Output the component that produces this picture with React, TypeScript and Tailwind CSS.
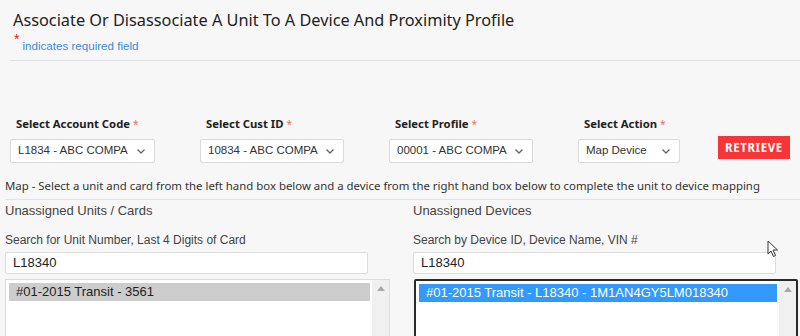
import React from "react";

const labels = [
  { text: "Select Account Code", value: "L1834 - ABC COMPA", w: "w-[145px]" },
  { text: "Select Cust ID", value: "10834 - ABC COMPA", w: "w-[144px]" },
  { text: "Select Profile", value: "00001 - ABC COMPA", w: "w-[144px]" },
  { text: "Select Action", value: "Map Device", w: "w-[102px]" },
];

const Chevron = () => (
  <svg width="10" height="7" viewBox="0 0 10 7" className="shrink-0">
    <path d="M1.5 1.5 L5 5 L8.5 1.5" fill="none" stroke="#666" strokeWidth="1.3" />
  </svg>
);

const ScrollUp = () => (
  <svg width="8" height="5" viewBox="0 0 8 5">
    <path d="M0 5 L4 0 L8 5 Z" fill="#a8a8a8" />
  </svg>
);

const Field = ({ label, value, w }: { label: string; value: string; w: string }) => (
  <div className="flex flex-col">
    <div className="pl-[6px] text-[11.3px] font-bold text-[#222] leading-[16px] [font-family:'Noto_Sans',sans-serif]">
      {label} <span className="text-[#ee6a6a] font-normal text-[10px] align-top">*</span>
    </div>
    <div
      className={`mt-[7px] h-[24px] ${w} bg-white border border-[#d9d9d9] rounded-[2px] flex items-center justify-between pl-[7px] pr-[8px] text-[11.5px] text-[#333] [font-family:'Liberation_Sans',Arial,sans-serif]`}
    >
      <span className="truncate">{value}</span>
      <Chevron />
    </div>
  </div>
);

const Column = ({
  title,
  hint,
  item,
  focused,
}: {
  title: string;
  hint: string;
  item: string;
  focused?: boolean;
}) => (
  <div className="flex flex-col w-[408px] shrink-0 pt-[3px] [font-family:'Liberation_Sans',Arial,sans-serif]">
    <div className="text-[13px] text-[#444] leading-[16px]">{title}</div>
    <div className="mt-[14px] text-[12px] text-[#444] leading-[15px]">{hint}</div>
    <div className="mt-[4px] w-[363px] h-[22px] bg-white border border-[#dcdcdc] rounded-[2px] flex items-center pl-[7px] text-[13px] text-[#222]">
      L18340
    </div>
    <div
      className={`mt-[5px] h-[70px] bg-white flex ${
        focused
          ? "w-[384px] border-2 border-[#2a2a2a] rounded-[2px] ml-[1px]"
          : "w-[385px] border border-[#dcdcdc]"
      }`}
    >
      <div className="flex-1 pt-[3px] pl-[3px] pr-[2px]">
        <div
          className={`h-[18px] flex items-center pl-[7px] text-[13px] ${
            focused ? "bg-[#3399ff] text-white" : "bg-[#cdcdcd] text-[#222]"
          }`}
        >
          {item}
        </div>
      </div>
      <div className="w-[17px] bg-[#f0f0f0] flex justify-center pt-[6px]">
        <ScrollUp />
      </div>
    </div>
  </div>
);

export default function App() {
  return (
    <div className="w-[800px] h-[336px] overflow-hidden bg-[#f7f7f7] relative">
      <div className="pl-[13px] pt-[8px] h-[60px]">
        <h1 className="text-[16.3px] leading-[24px] text-[#222] [font-family:'Noto_Sans',sans-serif]">
          Associate Or Disassociate A Unit To A Device And Proximity Profile
        </h1>
        <div className="flex items-start mt-[2px] [font-family:'Liberation_Sans',Arial,sans-serif]">
          <span className="text-[#e02020] text-[14px] leading-[10px] ml-[1px]">*</span>
          <span className="ml-[3px] mt-[5px] text-[11.6px] text-[#3d8bd6] leading-[14px]">
            indicates required field
          </span>
        </div>
      </div>
      <div className="ml-[10px] border-t border-[#e2e2e2]" />

      <div className="flex items-start pl-[10px] mt-[55px]">
        <div className="flex gap-[45px]">
          {labels.map((l) => (
            <Field key={l.text} label={l.text} value={l.value} w={l.w} />
          ))}
        </div>
        <button className="ml-[38px] mt-[20px] h-[23px] px-[7px] bg-[#f63636] text-white text-[11.5px] font-bold tracking-[0.6px] [font-family:'Noto_Sans',sans-serif]">
          RETRIEVE
        </button>
      </div>

      <div className="pl-[5px] mt-[15px] text-[11.4px] text-[#333] leading-[16px] [font-family:'Noto_Sans',sans-serif]">
        Map - Select a unit and card from the left hand box below and a device from the right hand box below to complete the unit to device mapping
      </div>
      <div className="ml-[5px] mt-[5px] border-t border-[#e4e4e4]" />

      <div className="flex pl-[5px]">
        <Column
          title="Unassigned Units / Cards"
          hint="Search for Unit Number, Last 4 Digits of Card"
          item="#01-2015 Transit - 3561"
        />
        <Column
          title="Unassigned Devices"
          hint="Search by Device ID, Device Name, VIN #"
          item="#01-2015 Transit - L18340 - 1M1AN4GY5LM018340"
          focused
        />
      </div>

      <svg className="absolute left-[767px] top-[240px]" width="12" height="18" viewBox="0 0 12 18">
        <path d="M1 1 L1 14 L4 11 L6.5 16.5 L8.5 15.5 L6 10 L10.5 10 Z" fill="white" stroke="#333" strokeWidth="1" />
      </svg>
    </div>
  );
}
